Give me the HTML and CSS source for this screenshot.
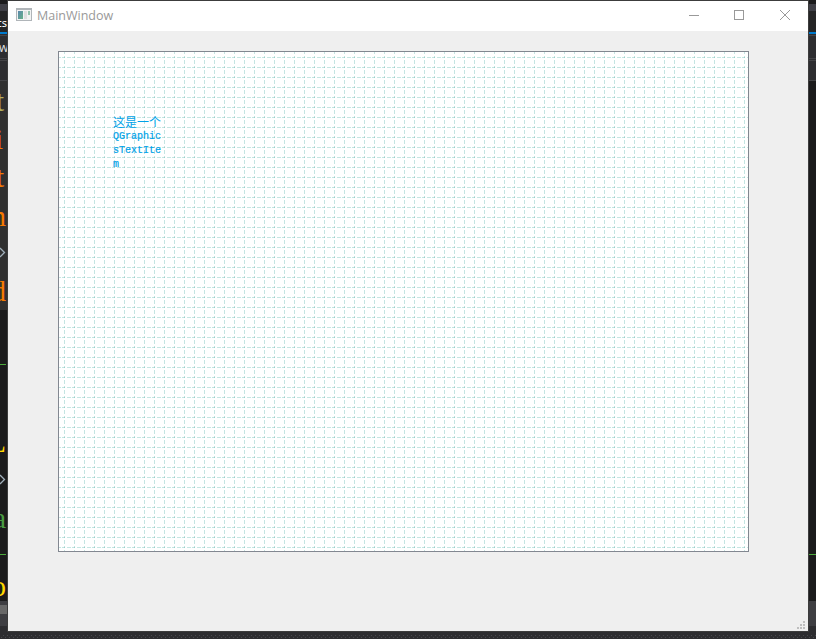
FILE: index.html
```
<!DOCTYPE html>
<html lang="zh">
<head>
<meta charset="utf-8">
<title>MainWindow</title>
<link rel="stylesheet" href="styles.css">
</head>
<body>
<svg class="backdrop" width="816" height="639" shape-rendering="crispEdges" aria-hidden="true">
  <defs><pattern id="dots" width="4" height="4" patternUnits="userSpaceOnUse"><rect x="1" y="1" width="1" height="1" fill="#49494d"/><rect x="3" y="3" width="1" height="1" fill="#49494d"/></pattern></defs>
  <rect width="816" height="639" fill="#1b1b1c"/>
  <rect width="816" height="81" fill="#2d2d30"/>
  <rect width="816" height="4" fill="#1b1b1c"/>
  <rect y="4" width="816" height="7" fill="#3f3f46"/>
  <rect y="11" width="816" height="21" fill="#252526"/>
  <rect y="32" width="816" height="2" fill="#007acc"/>
  <rect y="35" width="816" height="1" fill="#434346"/>
  <rect y="58" width="816" height="1" fill="#434346"/>
  <rect y="60" width="816" height="1" fill="#434346"/>
  <rect y="80" width="816" height="1" fill="#434346"/>
  <rect y="81" width="8" height="229" fill="#303030"/>
  <rect y="136" width="1" height="13" fill="#5b2c25"/>
  <path fill="#4ba83c" d="M0 364h6v1h-6zM0 554h6v1h-6zM808 554h8v1h-8z"/>
  <rect y="601" width="816" height="25" fill="#3e3e42"/>
  <rect y="605" width="8" height="9" fill="#686868"/>
  <rect y="626" width="816" height="13" fill="#2d2d30"/>
  <rect y="634" width="816" height="5" fill="url(#dots)"/>
  <g fill="none" stroke="#a0afba" stroke-width="1.300" shape-rendering="auto"><path d="M0 248l4.500 4.500-4.500 4.500M0 475l4.500 4.500-4.500 4.500"/></g>
</svg>
<span class="behind tab-a">cs</span>
<span class="behind tab-b">w</span>
<span class="behind code t1">t</span>
<span class="behind code orange i">i</span>
<span class="behind code orange t2">t</span>
<span class="behind code orange n">n</span>
<span class="behind code orange d">d</span>
<span class="behind code gold l">L</span>
<span class="behind code green">a</span>
<span class="behind code gold o">o</span>
<main class="window">
  <header class="titlebar">
    <svg class="app-icon" width="16" height="13" shape-rendering="crispEdges"><defs><linearGradient id="tint" x2="1" y2="1"><stop stop-color="#5b87ae"/><stop offset="1" stop-color="#66b187"/></linearGradient></defs><rect width="16" height="13" fill="#b0b5b9"/><rect x="1" y="2" width="14" height="10" fill="#f2f3f3"/><rect x="2" y="3" width="5" height="8" fill="url(#tint)"/><rect x="8" y="3" width="3" height="8" fill="#dedfdf"/><rect x="12" y="3" width="2" height="4" fill="#94c3ad"/></svg>
    <h1>MainWindow</h1>
    <svg class="controls" width="108" height="30" fill="none" stroke="#999"><path d="M0 15.500h10"/><rect x="45.500" y="10.500" width="9" height="9"/><path d="M91 10l10 10M101 10l-10 10"/></svg>
  </header>
  <section class="content">
    <div class="view">
      <svg class="grid" width="689" height="499" shape-rendering="crispEdges"><defs><pattern id="grid" width="10" height="10" patternUnits="userSpaceOnUse"><path fill="#c5e5e2" d="M3 5h3v1h-3zM8 5h2v1h-2zM0 5h2v1h-2zM5 0h1v2h-1zM5 4h1v2h-1zM5 8h1v2h-1z"/><rect x="5" y="5" width="1" height="1" fill="#98cfc9"/></pattern></defs><rect width="689" height="499" fill="url(#grid)"/></svg>
      <div class="item"><div class="han">这是一个</div><div>QGraphic</div><div>sTextIte</div><div>m</div></div>
    </div>
    <svg class="grip" width="8" height="8" shape-rendering="crispEdges"><path fill="#bebebe" d="M6 0h2v2h-2zM3 3h2v2h-2zM6 3h2v2h-2zM0 6h2v2h-2zM3 6h2v2h-2zM6 6h2v2h-2z"/></svg>
  </section>
</main>
</body>
</html>
```
FILE: styles.css
```
* { box-sizing: border-box; }
body { margin: 0; width: 816px; height: 639px; overflow: hidden; position: relative; background: #1e1e1e; }
svg { display: block; }
.backdrop { position: absolute; inset: 0; }
.behind { position: absolute; white-space: nowrap; }
.tab-a { right: 809px; top: 16px; font: 11px/14px "Noto Sans", sans-serif; color: #fff; }
.tab-b { left: -1px; top: 41px; font: 12px/14px "Noto Sans", sans-serif; color: #ddd; }
.code { right: 810px; font: 29px/32px "Liberation Serif", serif; }
.orange { color: #f57900; }
.t1 { top: 85px; right: 812px; color: #b5ad5a; }
.i { top: 123px; right: 813px; }
.t2 { top: 161px; right: 812px; }
.n { top: 200px; }
.d { top: 275px; }
.green { top: 502px; color: #4a9b42; }
.gold { color: #ffd700; }
.l { top: 426px; }
.o { top: 570px; }
.window { position: relative; width: 802px; height: 632px; margin-left: 7px; border: 1px solid #3c3c3c; display: flex; flex-direction: column; background: #efefef; }
.titlebar { height: 30px; background: #fff; display: flex; align-items: center; padding: 0 11px 0 8px; }
.app-icon { margin-top: -3px; }
h1 { margin: -1px 0 0 5px; font: 12.500px/20px "Open Sans", "Noto Sans", sans-serif; color: #999; }
.controls { margin-left: auto; margin-top: -2px; }
.content { flex: 1; padding: 20px 0 0 50px; position: relative; }
.view { width: 691px; height: 501px; border: 1px solid #828790; background: #fff; position: relative; }
.item { position: absolute; left: 54px; top: 63px; font: 10px/14px "Liberation Mono", monospace; color: #00a2e8; white-space: nowrap; -webkit-text-stroke: 0.2px #00a2e8; }
.item .han { font: 12px/14px "Noto Sans CJK SC", sans-serif; -webkit-text-stroke: 0; }
.item div + div { position: relative; top: 1px; }
.grip { position: absolute; right: 3px; bottom: 2px; }
```
